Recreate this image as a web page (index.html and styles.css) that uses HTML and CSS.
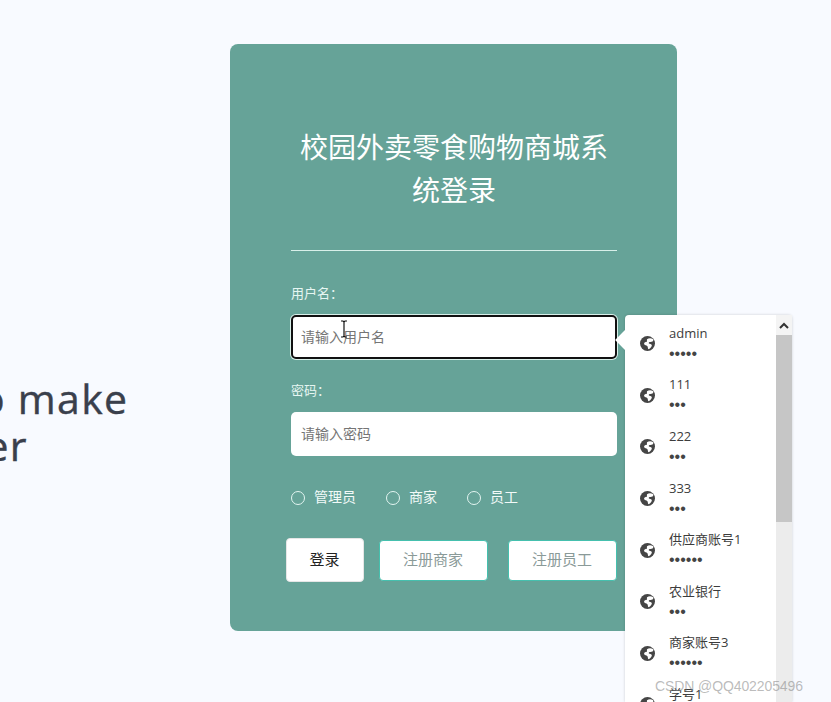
FILE: index.html
```html
<!DOCTYPE html>
<html lang="zh-CN">
<head>
    <meta charset="UTF-8">
    <meta name="viewport" content="width=device-width, initial-scale=1.0">
    <title>校园外卖零食购物商城系统登录</title>
    <link rel="stylesheet" href="styles.css">
</head>
<body>
    <svg class="icon-defs" width="0" height="0">
        <symbol id="globe" viewBox="0 0 16 16">
            <circle cx="8" cy="8" r="8" fill="#454545"/>
            <path d="M7.5 3.5c1.6-1.4 4-1.6 6.2-.4.8 1 .6 2.2-.4 2.8-1.4.6-3 .2-3.8 1-.6.8.4 1.4 1.4 1.6 1.4.3 2 1 1.6 2.2-.6 1.4-2 2.8-3.4 3.4-.8-.8-.6-2-1-3-.4-1-1.8-1-2.8-1.6-1-.6-1.2-1.6-.6-2.4.8-.8 2-.4 2.6-1.2.4-.6-.2-1.4.2-2.4z" fill="#fff"/>
        </symbol>
    </svg>

    <div class="page">
        <div class="intro">
            <p class="intro-line">to make</p>
            <p class="intro-line">better</p>
        </div>

        <form class="login-card">
            <h1 class="login-title">校园外卖零食购物商城系统登录</h1>
            <hr class="login-rule">

            <label class="field-label" for="username">用户名：</label>
            <input class="field-input field-focus" id="username" type="text" placeholder="请输入用户名">

            <label class="field-label second" for="password">密码：</label>
            <input class="field-input" id="password" type="text" placeholder="请输入密码">

            <div class="role-row">
                <span class="role"><i class="radio"></i>管理员</span>
                <span class="role"><i class="radio"></i>商家</span>
                <span class="role"><i class="radio"></i>员工</span>
            </div>

            <div class="button-row">
                <button class="btn btn-main" type="button">登录</button>
                <button class="btn btn-reg" type="button">注册商家</button>
                <button class="btn btn-reg" type="button">注册员工</button>
            </div>

            <svg class="text-cursor" width="8" height="18" viewBox="0 0 8 18">
                <path d="M1 1h2l1 1 1-1h2M4 2v14M1 17h2l1-1 1 1h2" fill="none" stroke="#111" stroke-width="1.2"/>
            </svg>
        </form>
    </div>

    <div class="autofill">
        <span class="autofill-arrow"></span>
        <ul class="autofill-list">
            <li class="autofill-item"><svg class="globe"><use href="#globe"/></svg><div><div class="acc-name">admin</div><div class="acc-pass">•••••</div></div></li>
            <li class="autofill-item"><svg class="globe"><use href="#globe"/></svg><div><div class="acc-name">111</div><div class="acc-pass">•••</div></div></li>
            <li class="autofill-item"><svg class="globe"><use href="#globe"/></svg><div><div class="acc-name">222</div><div class="acc-pass">•••</div></div></li>
            <li class="autofill-item"><svg class="globe"><use href="#globe"/></svg><div><div class="acc-name">333</div><div class="acc-pass">•••</div></div></li>
            <li class="autofill-item"><svg class="globe"><use href="#globe"/></svg><div><div class="acc-name">供应商账号1</div><div class="acc-pass">••••••</div></div></li>
            <li class="autofill-item"><svg class="globe"><use href="#globe"/></svg><div><div class="acc-name">农业银行</div><div class="acc-pass">•••</div></div></li>
            <li class="autofill-item"><svg class="globe"><use href="#globe"/></svg><div><div class="acc-name">商家账号3</div><div class="acc-pass">••••••</div></div></li>
            <li class="autofill-item"><svg class="globe"><use href="#globe"/></svg><div><div class="acc-name">学号1</div><div class="acc-pass">••••••</div></div></li>
        </ul>
        <div class="scrollbar">
            <div class="scroll-up">
                <svg width="10" height="7" viewBox="0 0 10 7"><path d="M1 6l4-4 4 4" fill="none" stroke="#333" stroke-width="2"/></svg>
            </div>
            <div class="scroll-thumb"></div>
        </div>
    </div>

    <div class="watermark">CSDN @QQ402205496</div>
</body>
</html>
```

FILE: styles.css
```css
* {
    box-sizing: border-box;
}
html, body {
    height: 100%;
}
body {
    margin: 0;
    overflow: hidden;
    background: #f8faff;
    font-family: "Liberation Sans", "Noto Sans CJK SC", sans-serif;
}
.icon-defs {
    position: absolute;
}
.page {
    display: flex;
    padding-top: 44px;
}

/* left column, cut off by the window */
.intro {
    width: 230px;
    height: 430px;
    padding-top: 331px;
    overflow: hidden;
}
.intro-line {
    margin: 0;
    height: 47px;
    line-height: 47px;
    font-family: "Open Sans", sans-serif;
    font-size: 41px;
    letter-spacing: 1.3px;
    color: #3a3f4c;
    white-space: nowrap;
    -webkit-text-stroke: 0.4px #3a3f4c;
}
.intro-line:first-child {
    margin-left: -36px;
}
.intro-line:last-child {
    margin-left: -97px;
}

/* login card */
.login-card {
    position: relative;
    width: 447px;
    height: 587px;
    padding: 83px 60px 0 61px;
    background: #66a398;
    border-radius: 8px;
}
.login-title {
    margin: 0;
    font-size: 28px;
    font-weight: 400;
    line-height: 43px;
    color: #fff;
    text-align: center;
}
.login-rule {
    margin: 37px 0 33px;
    border: 0;
    border-top: 1px solid #d8efe9;
}
.field-label {
    display: block;
    height: 20px;
    line-height: 20px;
    font-size: 13px;
    color: #e6f6f2;
}
.field-label.second {
    margin-top: 22px;
}
.field-input {
    display: block;
    width: 100%;
    height: 44px;
    margin-top: 11px;
    padding: 0 10px;
    border: 0;
    border-radius: 5px;
    background: #fff;
    font-family: inherit;
    font-size: 14px;
}
.field-input::placeholder {
    color: #757575;
}
.field-input.second {
    margin-top: 12px;
}
.field-focus {
    border: 2px solid #111;
    box-shadow: 0 0 0 1px #d8efe9;
    padding: 0 8px;
}
.role-row {
    display: flex;
    margin-top: 31px;
    gap: 30px;
}
.role {
    display: flex;
    align-items: center;
    height: 18px;
    font-size: 14px;
    color: #f2faf8;
}
.radio {
    width: 14px;
    height: 14px;
    margin: 4px 9px 0 0;
    border: 1px solid #e3f5f1;
    border-radius: 50%;
}
.button-row {
    display: flex;
    align-items: center;
    margin: 33px 0 0 -5px;
}
.btn {
    height: 41px;
    padding: 0 1px 3px 0;
    border-radius: 4px;
    background: #fff;
    font-family: inherit;
    font-size: 15px;
}
.btn-main {
    width: 78px;
    height: 44px;
    margin-right: 15px;
    border: 1px solid #e6e6e6;
    color: #222;
}
.btn-reg {
    width: 109px;
    border: 1px solid #45c0ae;
    color: #8a9a98;
}
.btn-reg:last-child {
    margin-left: 20px;
}
.text-cursor {
    position: absolute;
    left: 110px;
    top: 276px;
}

/* browser autofill popup */
.autofill {
    position: absolute;
    left: 625px;
    top: 315px;
    width: 167px;
    height: 387px;
    background: #fff;
    border-radius: 4px 4px 0 0;
    box-shadow: 0 0 3px rgba(0, 0, 0, 0.18);
    display: flex;
}
.autofill-arrow {
    position: absolute;
    left: -7px;
    top: 18px;
    width: 14px;
    height: 14px;
    background: #fff;
    transform: rotate(45deg);
}
.autofill-list {
    position: relative;
    flex: 1;
    margin: 0;
    padding: 3px 0 0;
    list-style: none;
    overflow: hidden;
}
.autofill-item {
    display: flex;
    align-items: center;
    height: 51.6px;
    padding-left: 15px;
}
.globe {
    flex: none;
    width: 15px;
    height: 15px;
    margin-right: 14px;
}
.acc-name {
    height: 21px;
    line-height: 21px;
    font-family: "Open Sans", "Noto Sans CJK SC", sans-serif;
    font-size: 13px;
    color: #3c3c3c;
    white-space: nowrap;
}
.acc-pass {
    height: 21px;
    line-height: 19px;
    font-family: "Liberation Sans", sans-serif;
    font-size: 16px;
    color: #444;
}
.scrollbar {
    flex: none;
    width: 16px;
    background: #ececec;
}
.scroll-up {
    display: flex;
    align-items: center;
    justify-content: center;
    height: 20px;
    background: #f4f4f4;
}
.scroll-thumb {
    height: 187px;
    background: #c6c6c6;
}
.watermark {
    position: absolute;
    left: 655px;
    top: 678px;
    font-size: 14px;
    letter-spacing: -0.1px;
    color: rgba(130, 130, 130, 0.55);
    white-space: nowrap;
}
```
